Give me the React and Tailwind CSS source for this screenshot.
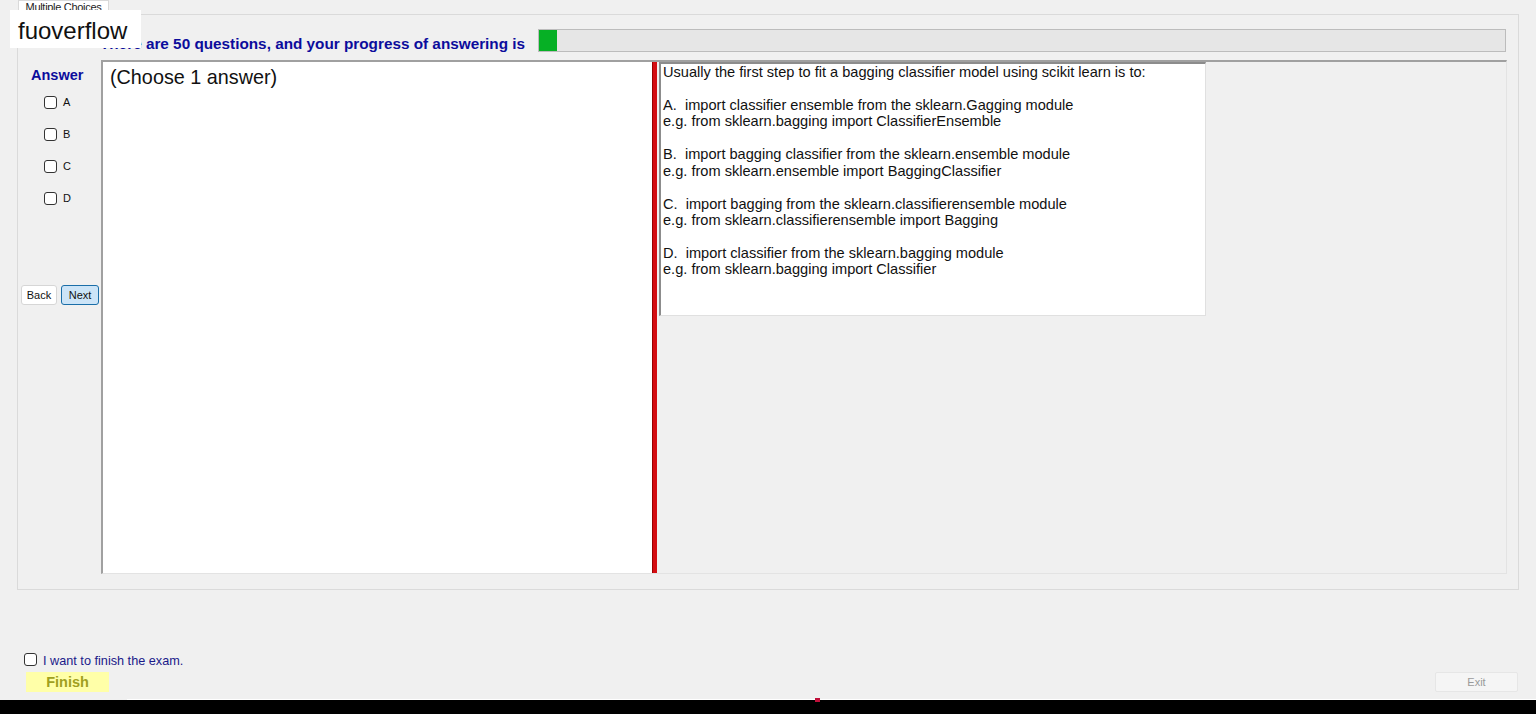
const options = ["A", "B", "C", "D"];

const question = [
  "Usually the first step to fit a bagging classifier model using scikit learn is to:",
  "",
  "A.  import classifier ensemble from the sklearn.Gagging module",
  "e.g. from sklearn.bagging import ClassifierEnsemble",
  "",
  "B.  import bagging classifier from the sklearn.ensemble module",
  "e.g. from sklearn.ensemble import BaggingClassifier",
  "",
  "C.  import bagging from the sklearn.classifierensemble module",
  "e.g. from sklearn.classifierensemble import Bagging",
  "",
  "D.  import classifier from the sklearn.bagging module",
  "e.g. from sklearn.bagging import Classifier",
];

function Box({ className = "" }) {
  return (
    <span
      className={`block h-[13px] w-[13px] shrink-0 rounded-[3px] border border-[#333] bg-white ${className}`}
    />
  );
}

export default function App() {
  return (
    <div className="relative flex h-[714px] w-[1536px] flex-col overflow-hidden bg-[#f0f0f0] font-['Liberation_Sans',Arial,sans-serif]">
      {/* tab header */}
      <div className="ml-[18px] flex h-[14px] w-[91px] shrink-0 items-end justify-center border border-b-0 border-[#d9d9d9] bg-white text-[11px] leading-[13px] tracking-[-0.3px] text-[#222]">
        Multiple Choices
      </div>

      {/* tab page */}
      <div className="ml-[17px] flex h-[576px] w-[1502px] shrink-0 flex-col border border-[#dadada] bg-[#f0f0f0]">
        <div className="mt-[14px] flex h-[23px] items-center">
          <div className="ml-[82px] mt-[7px] w-[438px] whitespace-nowrap text-[15.3px] font-bold leading-[16px] text-[#0c0c9c]">
            There are 50 questions, and your progress of answering is
          </div>
          <div className="h-[23px] w-[968px] border border-[#bcbcbc] bg-[#e6e6e6]">
            <div className="h-full w-[18px] bg-[#06b025]" />
          </div>
        </div>

        <div className="mt-[8px] flex">
          {/* answer column */}
          <div className="flex w-[83px] flex-col">
            <div className="mt-[7px] pl-[13px] text-[14.5px] font-bold leading-[17px] text-[#0c0c9c]">Answer</div>
            <div className="mt-[12px] flex flex-col gap-[19px] pl-[26px]">
              {options.map((o) => (
                <div key={o} className="flex items-center gap-[6px]">
                  <Box />
                  <span className="text-[11px] leading-[13px] text-[#111]">{o}</span>
                </div>
              ))}
            </div>
            <div className="mt-[80px] flex gap-[4px] pl-[3px]">
              <button className="h-[20px] w-[36px] rounded-[3px] border border-[#d6d6d6] bg-white text-[11px] text-[#111]">
                Back
              </button>
              <button className="h-[20px] w-[38px] rounded-[3px] border border-[#1a6ea8] bg-[#cce4f7] text-[11px] text-[#111]">
                Next
              </button>
            </div>
          </div>

          {/* main split panel */}
          <div className="flex h-[514px] w-[1406px] border-l-2 border-t-2 border-[#a0a0a0] border-b border-r border-b-[#e3e3e3] border-r-[#e3e3e3]">
            <div className="w-[549px] bg-white pl-[7px] pt-[3px] text-[19.8px] leading-[24px] text-[#111]">
              (Choose 1 answer)
            </div>
            <div className="w-[5px] border-l border-[#9a0000] bg-[#d40d12]" />
            <div className="flex-1 pl-[2px]">
              <div className="h-[254px] w-[547px] border-l-2 border-t-2 border-[#8c8c8c] border-b border-r border-b-[#e0e0e0] border-r-[#e0e0e0] bg-white pl-[2px]">
                {question.map((line, i) => (
                  <div key={i} className="h-[16.45px] whitespace-pre text-[14.6px] leading-[16.45px] text-[#111]">
                    {line}
                  </div>
                ))}
              </div>
            </div>
          </div>
        </div>
      </div>

      {/* footer */}
      <div className="mt-[62px] flex h-[15px] shrink-0 items-center pl-[24px]">
        <Box />
        <span className="ml-[6px] mt-[3px] text-[12.7px] leading-[15px] text-[#1a1a8a]">I want to finish the exam.</span>
      </div>
      <div className="mt-[5px] flex h-[20px] shrink-0 items-center justify-between pl-[26px] pr-[18px]">
        <button className="h-[20px] w-[83px] bg-[#ffffa8] text-[14.5px] font-bold leading-[18px] text-[#a0a020]">Finish</button>
        <button className="h-[20px] w-[83px] rounded-[2px] border border-[#e6e6e6] bg-[#f5f5f5] text-[11px] leading-[16px] text-[#9a9a9a]">
          Exit
        </button>
      </div>

      {/* bottom strip */}
      <div className="mt-[7px] ml-[127px] h-[1px] shrink-0 bg-white" />
      <div className="flex-1 bg-black" />
      <div className="absolute left-[815px] top-[698px] h-[4px] w-[5px] bg-[#c0103a]" />

      {/* watermark */}
      <div className="absolute left-[10px] top-[10px] flex h-[38px] w-[131px] items-center bg-white pl-[8px] pt-[4px] text-[24px] leading-[28px] text-[#111]">
        fuoverflow
      </div>
    </div>
  );
}
